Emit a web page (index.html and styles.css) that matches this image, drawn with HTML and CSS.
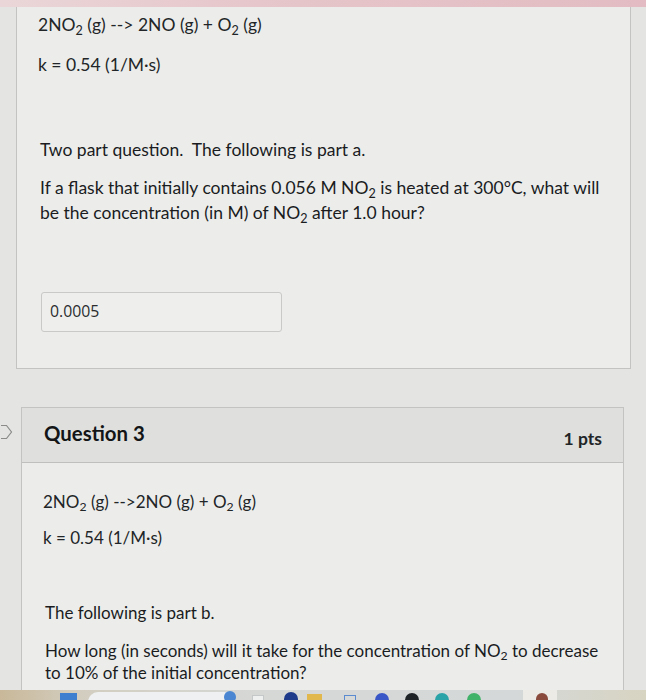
FILE: index.html
```html
<!DOCTYPE html>
<html lang="en">
<head>
<meta charset="utf-8">
<title>Quiz</title>
<link rel="stylesheet" href="styles.css">
</head>
<body>
<div class="screen">
  <div class="topbar"></div>
  <main class="page">
    <section class="card card-a">
      <div class="body">
        <p class="eq eq-1">2NO<sub>2</sub> (g) --&gt; 2NO (g) + O<sub>2</sub> (g)</p>
        <p class="eq eq-2">k = 0.54 (1/M·s)</p>
        <p class="txt txt-intro">Two part question.&nbsp; The following is part a.</p>
        <p class="txt txt-q">If a flask that initially contains 0.056 M NO<sub>2</sub> is heated at 300°C, what will be the concentration (in M) of NO<sub>2</sub> after 1.0 hour?</p>
        <div class="answer">0.0005</div>
      </div>
    </section>

    <section class="card card-b">
      <svg class="flag" width="12" height="16" viewBox="0 0 12 16"><path d="M-4 1.5 H5.5 L10.5 8 L5.5 14.5 H-4" fill="none" stroke="#8a8c8a" stroke-width="1.2"/></svg>
      <header class="qhead">
        <h2 class="qtitle">Question 3</h2>
        <span class="pts">1 pts</span>
      </header>
      <div class="body body-b">
        <p class="eq eq-b1">2NO<sub>2</sub> (g) --&gt;2NO (g) + O<sub>2</sub> (g)</p>
        <p class="eq eq-b2">k = 0.54 (1/M·s)</p>
        <p class="txt txt-b1">The following is part b.</p>
        <p class="txt txt-b2">How long (in seconds) will it take for the concentration of NO<sub>2</sub> to decrease to 10% of the initial concentration?</p>
      </div>
    </section>
  </main>
  <footer class="taskbar">
    <span class="tb-win"></span>
    <span class="tb-search"></span>
    <span class="tb-dot tb-blue1"></span>
    <span class="tb-sq"></span>
    <span class="tb-dot tb-navy"></span>
    <span class="tb-folder"></span>
    <span class="tb-sq tb-sq2"></span>
    <span class="tb-dot tb-blue2"></span>
    <span class="tb-dot tb-dark"></span>
    <span class="tb-dot tb-teal"></span>
    <span class="tb-dot tb-green"></span>
    <span class="tb-light"><span class="tb-dot tb-brown"></span></span>
  </footer>
</div>
</body>
</html>
```

FILE: styles.css
```css
* { box-sizing: border-box; }

html, body {
  margin: 0;
  padding: 0;
}

body {
  width: 646px;
  height: 700px;
  overflow: hidden;
  background: #e4e5e3;
  font-family: Lato, "Open Sans", sans-serif;
  color: #1a1c1e;
}

.screen {
  display: flex;
  flex-direction: column;
  height: 700px;
}

.topbar {
  height: 7px;
  flex: none;
  background: linear-gradient(to right, #ead6d8 0%, #e6c6ca 40%, #e2bcc2 100%);
}

.page {
  flex: 1;
  overflow: hidden;
  display: flex;
  flex-direction: column;
}

p { margin: 0; }

sub {
  font-size: 0.72em;
  vertical-align: -0.28em;
  line-height: 0;
}

.card {
  background: #ecedeb;
  border: 1px solid #c3c4c2;
  flex: none;
}

.card-a {
  margin-left: 16px;
  width: 615px;
  border-top: none;
}

.card-a .body {
  padding: 6px 0 36px 21px;
}

.eq {
  font-size: 17.5px;
  line-height: 24px;
  color: #222527;
}

.eq-2 { margin-top: 16px; }

.txt {
  font-size: 17.5px;
  line-height: 25px;
  padding-left: 2px;
  padding-right: 24px;
}

.txt-intro { margin-top: 60px; }
.txt-q { margin-top: 13px; }

.answer {
  margin-top: 67px;
  margin-left: 3px;
  width: 241px;
  height: 40px;
  border: 1px solid #c9cac8;
  border-radius: 3px;
  background: #eeefed;
  padding-left: 8px;
  padding-bottom: 3px;
  display: flex;
  align-items: center;
  font-family: "Open Sans", Lato, sans-serif;
  font-size: 15.8px;
  color: #2a2c2e;
}

.card-b {
  position: relative;
  margin-top: 38px;
  margin-left: 21px;
  width: 603px;
  flex: 1;
  border-bottom: none;
}

.flag {
  position: absolute;
  left: -21px;
  top: 16px;
}

.qhead {
  height: 55px;
  background: #dfe0de;
  border-bottom: 1px solid #bfc0be;
  display: flex;
  justify-content: space-between;
  align-items: flex-start;
  padding: 0 21px 0 22px;
}

.qtitle {
  margin: 11px 0 0;
  font-size: 20.4px;
  font-weight: 700;
  line-height: 28px;
  color: #131517;
}

.pts {
  margin-top: 18px;
  font-size: 17.5px;
  font-weight: 700;
  line-height: 25px;
  color: #222527;
}

.body-b {
  padding: 27px 0 0 21px;
}

.body-b .eq { font-size: 17px; }
.body-b .txt { font-size: 17px; padding-right: 14px; }

.eq-b2 { margin-top: 12px; }
.txt-b1 { margin-top: 50px; }
.txt-b2 { margin-top: 15px; line-height: 22px; }

.taskbar {
  flex: none;
  height: 10px;
  position: relative;
  overflow: hidden;
  background: linear-gradient(to right, #c9b899 0%, #d2cdbf 12%, #d6d8d6 40%, #d4d8d8 80%, #d8d4c2 100%);
}

.taskbar span { position: absolute; }

.tb-win {
  left: 60px; top: 3px; width: 17px; height: 14px;
  background: #3f7fcf;
}

.tb-search {
  left: 88px; top: 2px; width: 146px; height: 20px;
  border-radius: 10px;
  background: #eef0f1;
}

.tb-dot {
  width: 14px; height: 14px; border-radius: 50%;
  top: 3px;
}

.tb-blue1 { left: 224px; top: 1px; width: 12px; height: 12px; background: #4a86d2; }
.tb-sq { left: 252px; top: 5px; width: 12px; height: 12px; background: #eef0f0; border: 1px solid #c5c8c8; }
.tb-navy { left: 284px; top: 2px; background: #1d3a8a; }
.tb-folder { left: 307px; top: 4px; width: 15px; height: 10px; background: #e0b84e; }
.tb-sq2 { left: 344px; background: transparent; border: 1px solid #5a8ad0; }
.tb-blue2 { left: 375px; background: #3a57c8; }
.tb-dark { left: 405px; background: #1e2328; }
.tb-teal { left: 435px; background: #2aa3a8; }
.tb-green { left: 467px; background: #41b26a; }
.tb-light { left: 523px; top: 0; width: 34px; height: 10px; background: #ecebe5; }
.tb-brown { left: 13px; top: 3px; width: 12px; height: 12px; background: #8a4a3c; }
```
